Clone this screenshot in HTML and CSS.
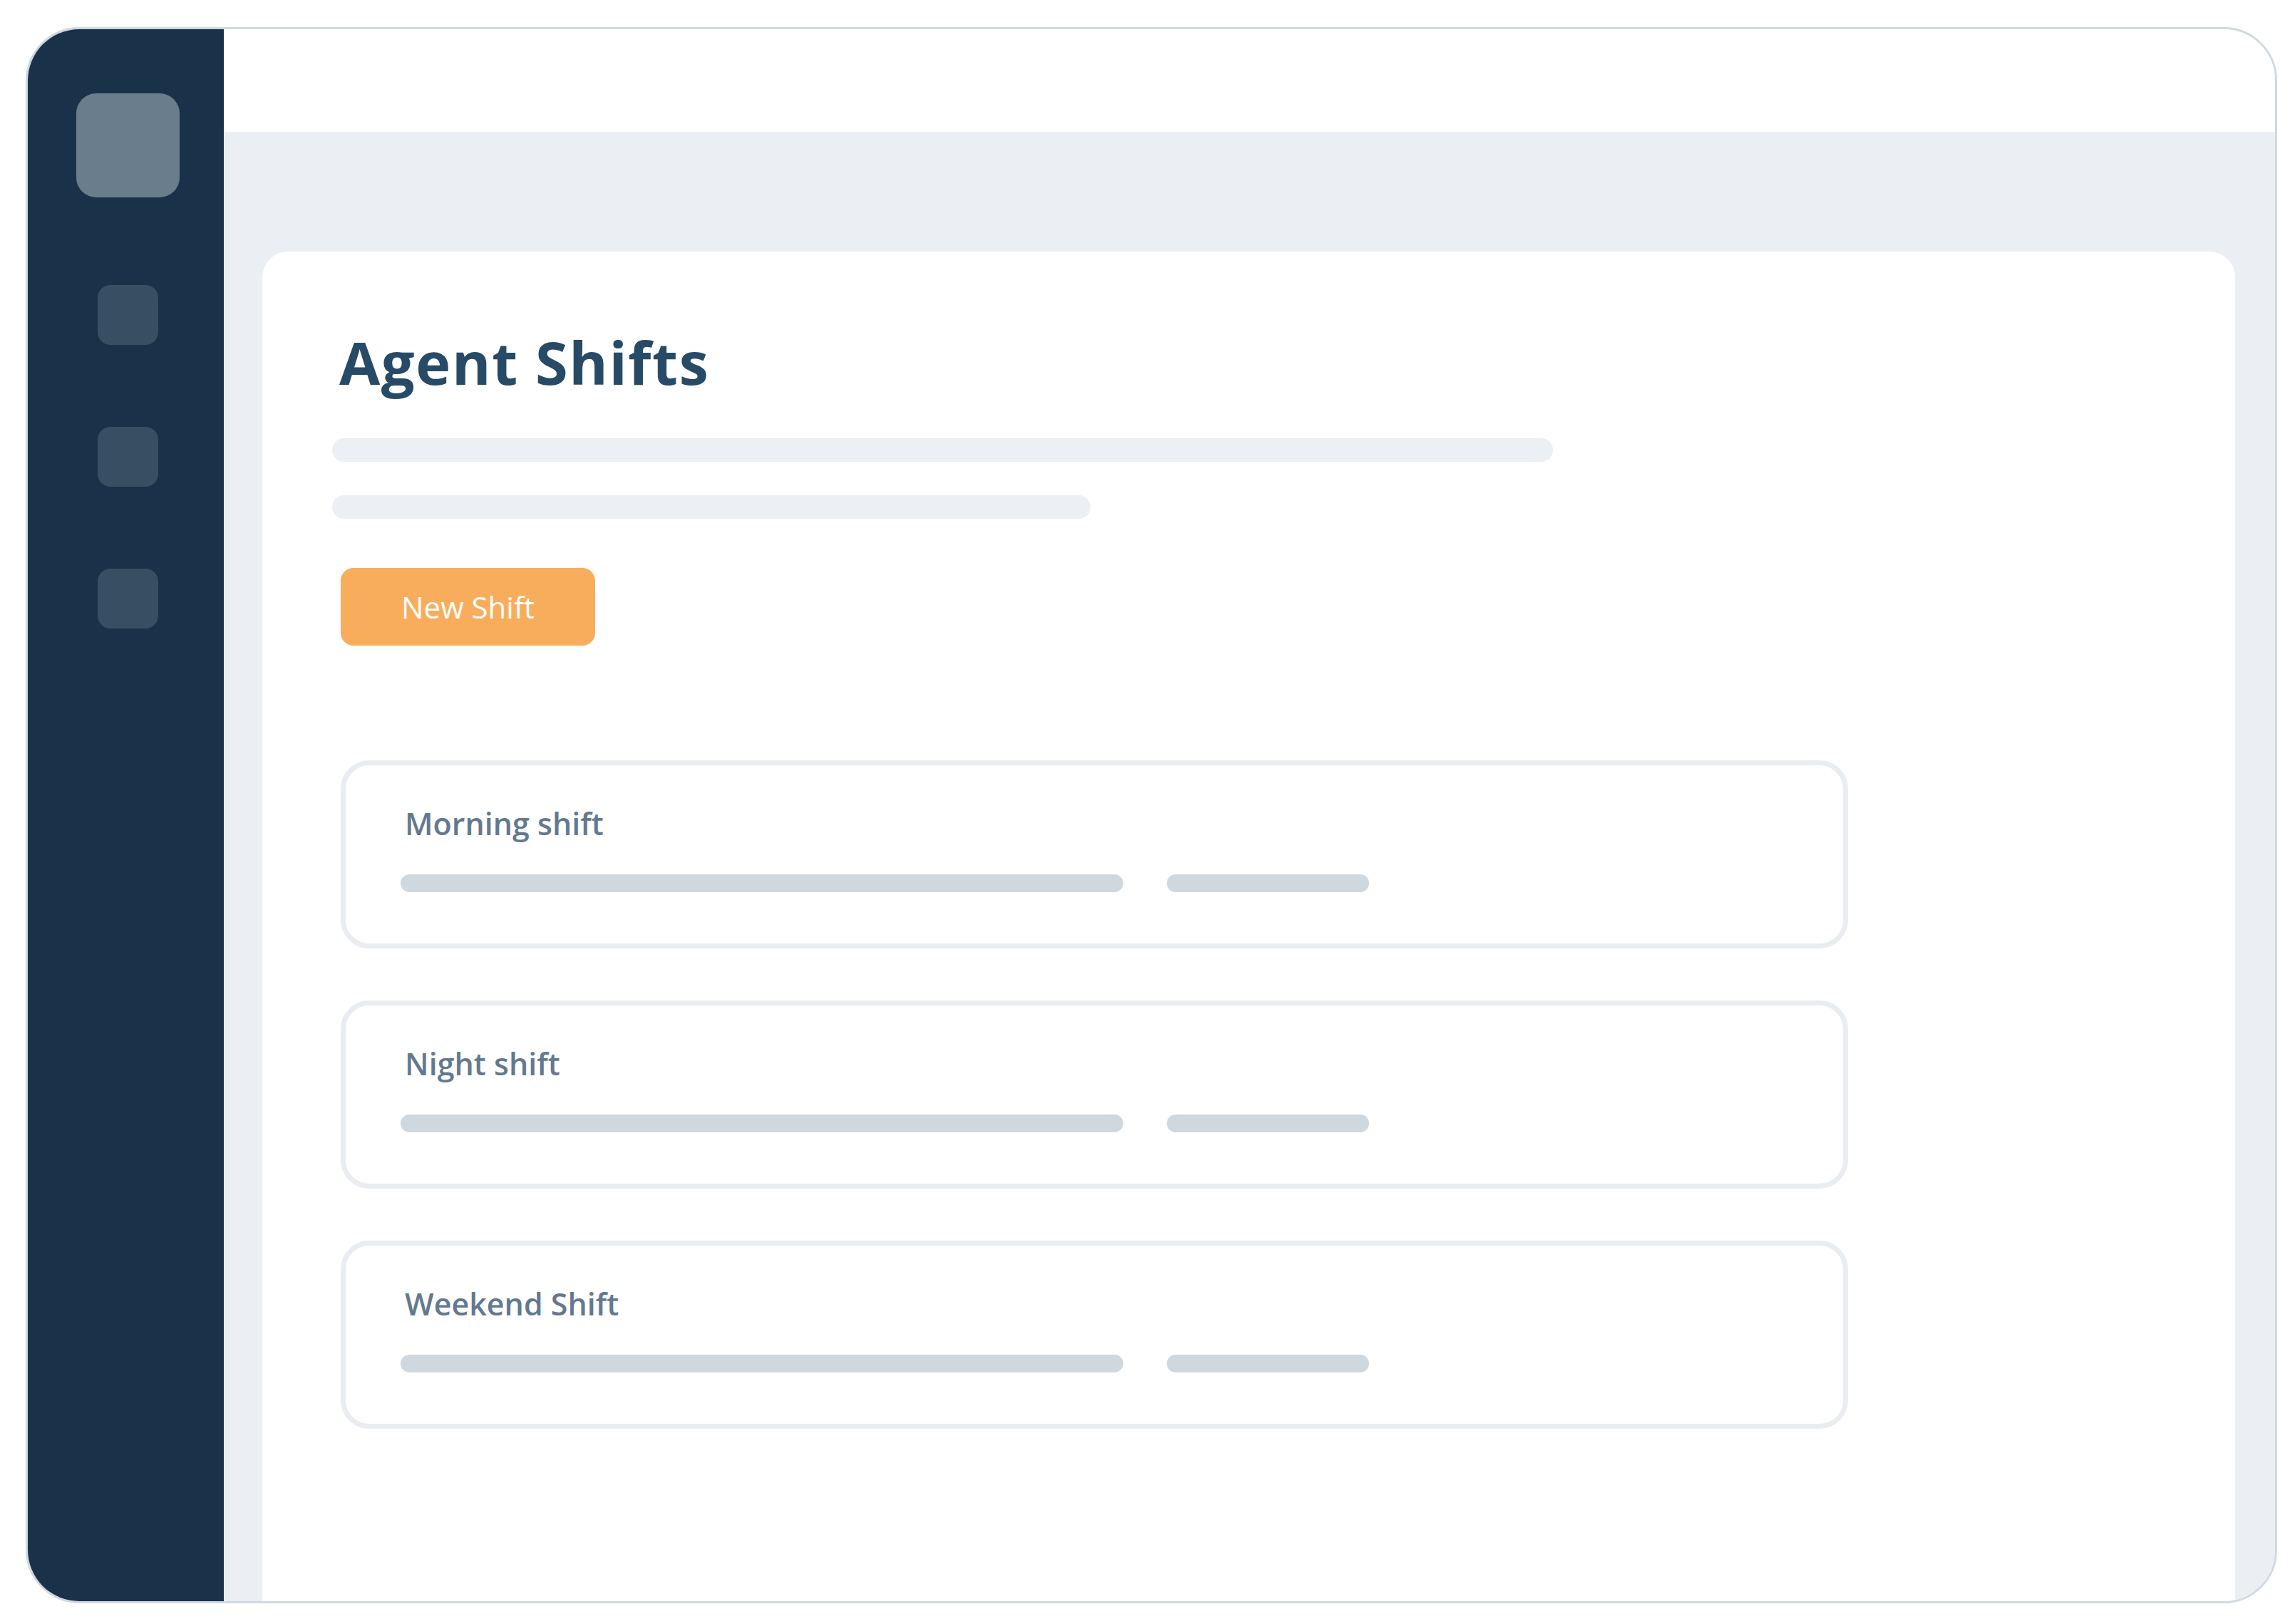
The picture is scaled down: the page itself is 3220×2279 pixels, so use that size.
FILE: index.html
```html
<!DOCTYPE html>
<html>
<head>
    <meta charset="utf-8" />
    <title>Agent Shifts</title>
    <link rel="stylesheet" href="styles.css">
</head>
<body>
    <div class="frame">
        <nav class="sideNav">
            <div class="logo"></div>
            <div class="navItem"></div>
            <div class="navItem"></div>
            <div class="navItem"></div>
        </nav>
        <div class="mainArea">
            <header class="topBar"></header>
            <main class="content">
                <section class="panel">
                    <h1 class="pageTitle">Agent Shifts</h1>
                    <div class="skeleton long"></div>
                    <div class="skeleton short"></div>
                    <button class="newBtn">New Shift</button>
                    <div class="shiftList">
                        <div class="shiftCard">
                            <p class="shiftName">Morning shift</p>
                            <div class="shiftBars">
                                <span class="bar wide"></span>
                                <span class="bar narrow"></span>
                            </div>
                        </div>
                        <div class="shiftCard">
                            <p class="shiftName">Night shift</p>
                            <div class="shiftBars">
                                <span class="bar wide"></span>
                                <span class="bar narrow"></span>
                            </div>
                        </div>
                        <div class="shiftCard">
                            <p class="shiftName">Weekend Shift</p>
                            <div class="shiftBars">
                                <span class="bar wide"></span>
                                <span class="bar narrow"></span>
                            </div>
                        </div>
                    </div>
                </section>
            </main>
        </div>
    </div>
</body>
</html>
```

FILE: styles.css
```css
body {
    font-family: 'Open Sans', 'Noto Sans', sans-serif;
    margin: 0;
    background-color: white;
}
p {
    margin: 0;
}
.frame {
    box-sizing: border-box;
    display: flex;
    width: 3159px;
    height: 2212px;
    margin: 38px 0 0 36px;
    border: 3px solid #D0D9E1;
    border-radius: 75px;
    overflow: hidden;
}
.sideNav {
    width: 275px;
    flex-shrink: 0;
    background-color: #19324A;
    display: flex;
    flex-direction: column;
    align-items: center;
    padding-top: 90px;
    padding-left: 5px;
    box-sizing: border-box;
}
.logo {
    width: 145px;
    height: 146px;
    border-radius: 28px;
    background-color: #6A7D8C;
    margin-bottom: 123px;
}
.navItem {
    width: 85px;
    height: 84px;
    border-radius: 18px;
    background-color: #384F63;
    margin-bottom: 115px;
}
.mainArea {
    flex-grow: 1;
    display: flex;
    flex-direction: column;
}
.topBar {
    height: 144px;
    background-color: white;
}
.content {
    flex-grow: 1;
    display: flex;
    background-color: #EBEEF2;
    padding: 168px 56px 0 54px;
}
.panel {
    flex-grow: 1;
    background-color: white;
    border-radius: 36px 36px 0 0;
    padding: 113px 0 0 110px;
}
.pageTitle {
    margin: 0 0 66px -2px;
    font-size: 83px;
    line-height: 1;
    font-weight: 700;
    letter-spacing: 1.6px;
    color: #274A66;
}
.skeleton {
    height: 33px;
    border-radius: 17px;
    background-color: #ECEFF3;
    margin-left: -12px;
}
.long {
    width: 1713px;
    margin-bottom: 47px;
}
.short {
    width: 1064px;
}
.newBtn {
    display: flex;
    align-items: center;
    justify-content: center;
    width: 357px;
    height: 109px;
    margin-top: 69px;
    border: none;
    border-radius: 18px;
    background-color: #F8AD5C;
    color: white;
    font-family: 'Open Sans', sans-serif;
    font-size: 42px;
    line-height: 1;
}
.shiftList {
    display: flex;
    flex-direction: column;
    gap: 73px;
    margin-top: 161px;
}
.shiftCard {
    box-sizing: border-box;
    width: 2115px;
    height: 264px;
    border: 7px solid #E9EDF2;
    border-radius: 40px;
    padding: 60px 0 0 77px;
}
.shiftName {
    margin-left: 6px;
    font-size: 43px;
    line-height: 1;
    font-weight: 600;
    color: #63798F;
}
.shiftBars {
    display: flex;
    gap: 61px;
    margin-top: 50px;
}
.bar {
    height: 25px;
    border-radius: 13px;
    background-color: #D0D8DF;
}
.wide {
    width: 1014px;
}
.narrow {
    width: 284px;
}
```
